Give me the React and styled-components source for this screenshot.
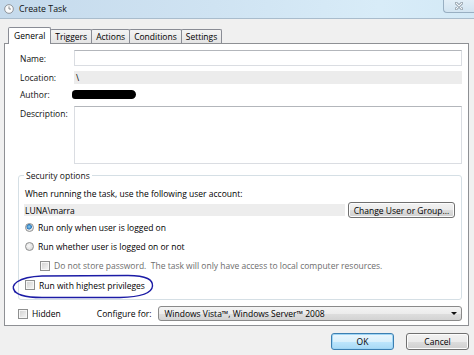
import React from "react";
import styled, { createGlobalStyle } from "styled-components";

const GlobalStyle = createGlobalStyle`
  html, body {
    margin: 0;
    padding: 0;
    background: #f0f0f0;
  }
  body {
    font-family: "Open Sans", "Noto Sans", sans-serif;
    font-size: 8.5px;
    color: #000;
  }
`;

const Window = styled.div`
  position: relative;
  width: 474px;
  height: 355px;
  overflow: hidden;
  display: flex;
  flex-direction: column;
  background: #f0f0f0;
`;

const TitleBar = styled.div`
  flex: none;
  height: 19px;
  box-sizing: border-box;
  display: flex;
  align-items: center;
  padding-left: 4px;
  background: linear-gradient(to right, #c5daec 0%, #cfe3f2 45%, #d8ecf8 80%, #d3e9f6 100%);
  border-bottom: 1px solid #a9bccc;
`;

const TitleText = styled.span`
  margin-left: 5px;
  font-size: 8.8px;
  color: #111;
`;

const CloseButton = styled.div`
  align-self: flex-start;
  margin-left: auto;
  width: 31px;
  height: 13px;
  box-sizing: border-box;
  display: flex;
  align-items: center;
  justify-content: center;
  border: 1px solid #98afc2;
  border-top: none;
  border-right: none;
  border-bottom-left-radius: 4px;
  background: linear-gradient(#e2eef7, #d2e4f1);
`;

const Body = styled.div`
  flex: 1;
  display: flex;
  flex-direction: column;
  padding-top: 8px;
`;

const TabStrip = styled.div`
  position: relative;
  z-index: 1;
  height: 16px;
  display: flex;
  align-items: flex-end;
  padding-left: 9px;
`;

const Tab = styled.div`
  box-sizing: border-box;
  height: ${({ $active }) => ($active ? "17px" : "14px")};
  margin-bottom: ${({ $active }) => ($active ? "-1px" : "0")};
  margin-left: -1px;
  padding: ${({ $active }) => ($active ? "0 5px 2px" : "0 4px")};
  display: flex;
  align-items: center;
  border: 1px solid #898c95;
  border-bottom: none;
  border-radius: 2px 2px 0 0;
  background: ${({ $active }) =>
    $active ? "#fff" : "linear-gradient(#f4f4f4, #e4e4e4)"};
  position: relative;
  z-index: ${({ $active }) => ($active ? 2 : 1)};
  color: #000;
`;

const Panel = styled.div`
  box-sizing: border-box;
  height: 283px;
  margin: 0 5px 0 4px;
  border: 1px solid #8e9094;
  background: #fff;
  display: flex;
  flex-direction: column;
  padding: 6px 6px 0 13px;
`;

const FieldRow = styled.div`
  display: grid;
  grid-template-columns: 54px 1fr;
  align-items: ${({ $top }) => ($top ? "start" : "center")};
  padding-left: 2px;
  margin-top: ${({ $mt }) => $mt || 0}px;
  min-height: ${({ $h }) => $h || 0}px;
`;

const Label = styled.span`
  color: #111;
  padding-top: ${({ $top }) => ($top ? "2px" : "0")};
`;

const TextInput = styled.div`
  height: ${({ $h }) => $h}px;
  box-sizing: border-box;
  border: 1px solid #dadde2;
  border-top-color: #b3b6bb;
  background: #fff;
`;

const ReadOnly = styled.div`
  height: 13px;
  display: flex;
  align-items: center;
  padding-left: 2px;
  background: #ececec;
`;

const Redacted = styled.span`
  display: block;
  width: 64px;
  height: 9px;
  margin-left: -2px;
  background: #000;
  border-radius: 5px 6px 6px 4px;
`;

const GroupBox = styled.fieldset`
  margin: 6px 0 0 0;
  padding: 0 6px 4px 6px;
  border: 1px solid #d5dfe5;
  border-radius: 3px;
  min-width: 0;
`;

const Legend = styled.legend`
  padding: 0 2px;
  margin-left: -1px;
  line-height: 11px;
  color: #111;
`;

const Line = styled.div`
  display: flex;
  align-items: center;
  gap: ${({ $gap }) => $gap || 0}px;
  height: ${({ $h }) => $h}px;
  margin-top: ${({ $mt }) => $mt || 0}px;
  padding-left: ${({ $indent }) => $indent || 0}px;
  color: ${({ $disabled }) => ($disabled ? "#6d6d6d" : "#000")};
  white-space: nowrap;
`;

const AccountField = styled.div`
  flex: 1;
  height: 12px;
  display: flex;
  align-items: center;
  padding-left: 1px;
  margin-left: -1px;
  background: #ededed;
`;

const Button = styled.button`
  box-sizing: border-box;
  height: ${({ $h }) => $h || 17}px;
  width: ${({ $w }) => ($w ? `${$w}px` : "auto")};
  padding: 0 4px;
  font-family: inherit;
  font-size: inherit;
  color: #000;
  white-space: nowrap;
  border: 1px solid ${({ $default }) => ($default ? "#3c7fb1" : "#707070")};
  border-radius: 3px;
  background: ${({ $default }) =>
    $default
      ? "linear-gradient(#eaf6fd 0%, #d9f0fc 50%, #bee6fd 51%, #a7d9f5 100%)"
      : "linear-gradient(#f2f2f2 0%, #ebebeb 50%, #dddddd 51%, #cfcfcf 100%)"};
  box-shadow: inset 0 0 0 1px ${({ $default }) => ($default ? "#9fd5f5" : "#fcfcfc")};
  flex: none;
`;

const CheckBox = styled.span`
  flex: none;
  width: 10px;
  height: 10px;
  box-sizing: border-box;
  border: 1px solid #8e8f8f;
  background: linear-gradient(135deg, #cfcfcf, #f7f7f7);
  box-shadow: inset 0 0 0 1px #f6f6f6;
`;

const Radio = styled.span`
  flex: none;
  width: 9px;
  height: 9px;
  box-sizing: border-box;
  border-radius: 50%;
  border: 1px solid #8e8f8f;
  background: ${({ $checked }) =>
    $checked
      ? "radial-gradient(circle at 45% 40%, #8cd0f7 0, #2f7bbd 2.4px, #e6e6e6 3px, #f8f8f8 100%)"
      : "radial-gradient(circle at 40% 40%, #f8f8f8, #d0d0d0)"};
`;

const BottomRow = styled.div`
  display: flex;
  align-items: center;
  height: 15px;
  margin-top: 6px;
`;

const HiddenGroup = styled.label`
  display: flex;
  align-items: center;
  gap: 4px;
`;

const ConfigureLabel = styled.span`
  margin-left: 36px;
  margin-right: 7px;
  white-space: nowrap;
`;

const Select = styled.div`
  flex: 1;
  height: 15px;
  box-sizing: border-box;
  display: flex;
  align-items: center;
  justify-content: space-between;
  padding: 0 4px 0 5px;
  border: 1px solid #8a8a8a;
  border-radius: 3px;
  background: linear-gradient(#f4f4f4 0%, #ececec 50%, #dedede 51%, #d3d3d3 100%);
  white-space: nowrap;
`;

const Arrow = styled.span`
  width: 0;
  height: 0;
  border-left: 3px solid transparent;
  border-right: 3px solid transparent;
  border-top: 3px solid #111;
`;

const Footer = styled.div`
  display: flex;
  justify-content: flex-end;
  gap: 12px;
  margin-top: 7px;
  padding-right: 5px;
`;

const Annotation = styled.svg`
  position: absolute;
  left: 0;
  top: 0;
  pointer-events: none;
`;

const tabs = ["General", "Triggers", "Actions", "Conditions", "Settings"];

const App = () => {
  return (
    <>
      <GlobalStyle />
      <Window>
        <TitleBar>
          <svg width="10" height="10" viewBox="0 0 10 10">
            <circle cx="5" cy="5" r="4.4" fill="#e9ecef" stroke="#8c9196" strokeWidth="0.9" />
            <circle cx="5" cy="5" r="3.2" fill="#fbfbfb" />
            <path d="M5 2.4 V5 H7" stroke="#7a7f85" strokeWidth="0.9" fill="none" />
          </svg>
          <TitleText>Create Task</TitleText>
          <CloseButton>
            <svg width="8" height="8" viewBox="0 0 8 8">
              <path d="M1 1 L7 7 M7 1 L1 7" stroke="#7b8a96" strokeWidth="2.6" strokeLinecap="round" />
              <path d="M1 1 L7 7 M7 1 L1 7" stroke="#f4f8fb" strokeWidth="1.2" strokeLinecap="round" />
            </svg>
          </CloseButton>
        </TitleBar>

        <Body>
          <TabStrip>
            {tabs.map((t, i) => (
              <Tab key={t} $active={i === 0}>
                {t}
              </Tab>
            ))}
          </TabStrip>

          <Panel>
            <FieldRow>
              <Label>Name:</Label>
              <TextInput $h={16} />
            </FieldRow>
            <FieldRow $mt={5}>
              <Label>Location:</Label>
              <ReadOnly>\</ReadOnly>
            </FieldRow>
            <FieldRow $h={20}>
              <Label>Author:</Label>
              <Redacted />
            </FieldRow>
            <FieldRow $top $mt={2}>
              <Label $top>Description:</Label>
              <TextInput $h={58} />
            </FieldRow>

            <GroupBox>
              <Legend>Security options</Legend>
              <Line $h={12} $mt={6}>
                When running the task, use the following user account:
              </Line>
              <Line $h={16} $mt={3} $gap={3}>
                <AccountField>LUNA\marra</AccountField>
                <Button $h={16} $w={107}>Change User or Group...</Button>
              </Line>
              <Line $h={19} $gap={4}>
                <Radio $checked />
                Run only when user is logged on
              </Line>
              <Line $h={19} $gap={4}>
                <Radio />
                Run whether user is logged on or not
              </Line>
              <Line $h={19} $gap={4} $indent={15} $disabled>
                <CheckBox />
                Do not store password.&nbsp; The task will only have access to local computer resources.
              </Line>
              <Line $h={20} $gap={4}>
                <CheckBox />
                Run with highest privileges
              </Line>
            </GroupBox>

            <BottomRow>
              <HiddenGroup>
                <CheckBox />
                Hidden
              </HiddenGroup>
              <ConfigureLabel>Configure for:</ConfigureLabel>
              <Select>
                <span>Windows Vista™, Windows Server™ 2008</span>
                <Arrow />
              </Select>
            </BottomRow>
          </Panel>

          <Footer>
            <Button $default $w={63}>OK</Button>
            <Button $w={63}>Cancel</Button>
          </Footer>
        </Body>

        <Annotation width="474" height="355" viewBox="0 0 474 355">
          <path
            d="M15 292 C 9 285, 18 277, 42 276 L 128 275.5 C 147 275.5, 153 280, 152.5 286 C 152 293, 142 297, 120 297.5 L 42 297.5 C 25 297.5, 15 295, 13.5 288.5"
            fill="none"
            stroke="#1c1ca6"
            strokeWidth="1.4"
            strokeLinecap="round"
          />
        </Annotation>
      </Window>
    </>
  );
};

export default App;
